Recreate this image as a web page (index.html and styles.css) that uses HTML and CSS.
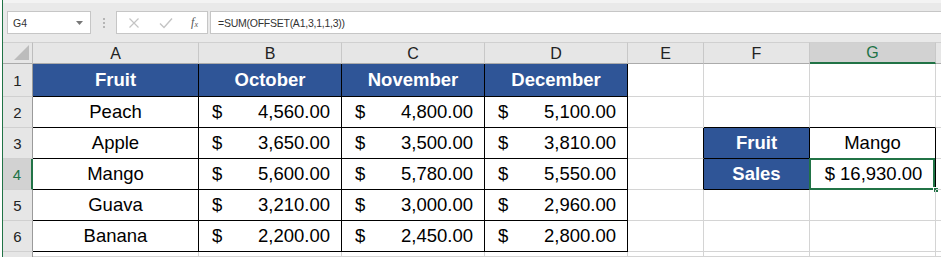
FILE: index.html
```html
<!doctype html>
<html lang="en">
<head>
    <meta charset="UTF-8">
    <title>OFFSET sum</title>
    <link rel="stylesheet" href="styles.css">
</head>
<body>
<div class="app">
    <div class="fbar">
        <div class="namebox">
            <span>G4</span>
            <svg class="caret" width="7" height="4" viewBox="0 0 7 4"><path d="M0 0h7L3.5 4z" fill="#777"/></svg>
        </div>
        <div class="grip"><i></i><i></i><i></i></div>
        <div class="btns">
            <svg width="12" height="12" viewBox="0 0 12 12"><path d="M1.5 1.5l9 9M10.5 1.5l-9 9" stroke="#c4c4c4" stroke-width="1.2" fill="none"/></svg>
            <svg width="14" height="12" viewBox="0 0 14 12"><path d="M1 6.5l4 4L13 1.5" stroke="#c4c4c4" stroke-width="1.4" fill="none"/></svg>
            <span class="fx">f<sub>x</sub></span>
        </div>
        <div class="formula">=SUM(OFFSET(A1,3,1,1,3))</div>
    </div>

    <div class="sheet">
        <div class="corner"><i></i></div>
        <div class="ch">A</div>
        <div class="ch">B</div>
        <div class="ch">C</div>
        <div class="ch">D</div>
        <div class="ch">E</div>
        <div class="ch">F</div>
        <div class="ch sel">G</div>
        <div class="ch last"></div>

        <div class="rh r1">1</div>
        <div class="c t hd">Fruit</div>
        <div class="c t hd">October</div>
        <div class="c t hd">November</div>
        <div class="c t hd">December</div>
        <div class="c"></div>
        <div class="c"></div>
        <div class="c"></div>
        <div class="c last"></div>

        <div class="rh">2</div>
        <div class="c t mid">Peach</div>
        <div class="c t acc"><span>$</span><span>4,560.00</span></div>
        <div class="c t acc"><span>$</span><span>4,800.00</span></div>
        <div class="c t acc"><span>$</span><span>5,100.00</span></div>
        <div class="c"></div>
        <div class="c bb"></div>
        <div class="c bb"></div>
        <div class="c last"></div>

        <div class="rh">3</div>
        <div class="c t mid">Apple</div>
        <div class="c t acc"><span>$</span><span>3,650.00</span></div>
        <div class="c t acc"><span>$</span><span>3,500.00</span></div>
        <div class="c t acc"><span>$</span><span>3,810.00</span></div>
        <div class="c br"></div>
        <div class="c t hd">Fruit</div>
        <div class="c t mid">Mango</div>
        <div class="c last"></div>

        <div class="rh sel">4</div>
        <div class="c t mid">Mango</div>
        <div class="c t acc"><span>$</span><span>5,600.00</span></div>
        <div class="c t acc"><span>$</span><span>5,780.00</span></div>
        <div class="c t acc"><span>$</span><span>5,550.00</span></div>
        <div class="c br"></div>
        <div class="c t hd">Sales</div>
        <div class="c t mid active">$ 16,930.00<b class="cursor"></b><b class="handle"></b></div>
        <div class="c last"></div>

        <div class="rh">5</div>
        <div class="c t mid">Guava</div>
        <div class="c t acc"><span>$</span><span>3,210.00</span></div>
        <div class="c t acc"><span>$</span><span>3,000.00</span></div>
        <div class="c t acc"><span>$</span><span>2,960.00</span></div>
        <div class="c"></div>
        <div class="c"></div>
        <div class="c"></div>
        <div class="c last"></div>

        <div class="rh">6</div>
        <div class="c t mid">Banana</div>
        <div class="c t acc"><span>$</span><span>2,200.00</span></div>
        <div class="c t acc"><span>$</span><span>2,450.00</span></div>
        <div class="c t acc"><span>$</span><span>2,800.00</span></div>
        <div class="c"></div>
        <div class="c"></div>
        <div class="c"></div>
        <div class="c last"></div>

        <div class="rh r7"></div>
        <div class="c"></div>
        <div class="c"></div>
        <div class="c"></div>
        <div class="c"></div>
        <div class="c"></div>
        <div class="c"></div>
        <div class="c"></div>
        <div class="c last"></div>
    </div>
</div>
</body>
</html>
```

FILE: styles.css
```css
*{
    margin: 0;
    padding: 0;
    box-sizing: border-box;
}
body{
    width: 941px;
    height: 257px;
    overflow: hidden;
    background: #fff;
    font-family: "Liberation Sans", Arial, sans-serif;
}
.app{
    margin-left: 2px;
    border-left: 1px solid #217346;
    height: 257px;
}

/* formula bar */
.fbar{
    height: 42px;
    background: #e9e9e9;
    border-top: 3px solid #f3f3f3;
    display: flex;
    align-items: flex-start;
    padding: 8px 0 0 4px;
    font-size: 10.5px;
    color: #333;
}
.namebox{
    width: 84px;
    height: 23px;
    background: #fff;
    border: 1px solid #c6c6c6;
    display: flex;
    align-items: center;
    justify-content: space-between;
    padding: 0 7px 0 5px;
}
.grip{
    width: 25px;
    height: 23px;
    display: flex;
    flex-direction: column;
    align-items: center;
    justify-content: center;
    gap: 2px;
}
.grip i{
    width: 2px;
    height: 2px;
    background: #b5b5b5;
}
.btns{
    width: 92px;
    height: 23px;
    background: #fff;
    border: 1px solid #c6c6c6;
    display: flex;
    align-items: center;
    justify-content: space-between;
    padding: 0 9px 0 11px;
}
.fx{
    font-family: "Liberation Serif", serif;
    font-style: italic;
    font-size: 12px;
    color: #555;
}
.fx sub{
    font-size: 8px;
    vertical-align: -1px;
}
.formula{
    flex: 1;
    height: 23px;
    margin-left: 2px;
    background: #fff;
    border: 1px solid #c6c6c6;
    border-right: none;
    padding: 5px 0 0 7px;
    letter-spacing: -0.25px;
}

/* grid */
.sheet{
    display: grid;
    grid-template-columns: 30px 166px 143px 143px 143px 76px 106px 126px 1fr;
    grid-template-rows: 22px 33px 31px 31px 31px 31px 31px 1fr;
    height: 215px;
}
.corner{
    background: #e6e6e6;
    border-top: 1px solid #d0d0d0;
    border-right: 1px solid #bdbdbd;
    border-bottom: 1px solid #ababab;
    position: relative;
}
.corner i{
    position: absolute;
    right: 3px;
    bottom: 3px;
    width: 0;
    height: 0;
    border-left: 15px solid transparent;
    border-bottom: 15px solid #bcbcbc;
}
.ch{
    background: #e6e6e6;
    border-top: 1px solid #d0d0d0;
    border-right: 1px solid #c8c8c8;
    border-bottom: 1px solid #ababab;
    font-size: 16px;
    color: #222;
    display: flex;
    align-items: center;
    justify-content: center;
    padding-top: 1px;
}
.ch.sel{
    background: #d2d2d2;
    color: #217346;
    border-bottom: 2px solid #217346;
}
.ch.last{
    border-right: none;
}
.rh{
    background: #e6e6e6;
    border-right: 1px solid #9a9a9a;
    border-bottom: 1px solid #d0d0d0;
    font-size: 15px;
    color: #222;
    display: flex;
    align-items: center;
    justify-content: center;
}
.rh.sel{
    background: #d2d2d2;
    color: #217346;
    border-right: 2px solid #217346;
}
.rh.r7{
    border-bottom: none;
}
.c{
    border-right: 1px solid #d4d4d4;
    border-bottom: 1px solid #d4d4d4;
    position: relative;
}
.c.last{
    border-right: none;
}
.c.t{
    border-right-color: #000;
    border-bottom-color: #000;
    font-size: 18.5px;
    color: #000;
    display: flex;
    align-items: center;
}
.c.bb{
    border-bottom-color: #000;
}
.c.br{
    border-right-color: #000;
}
.hd{
    background: #2f5597;
    color: #fff !important;
    font-weight: bold;
    justify-content: center;
}
.mid{
    justify-content: center;
}
.acc{
    justify-content: space-between;
    padding: 0 11px 0 13px;
}
.active{
    padding-left: 2px;
}
.cursor{
    position: absolute;
    left: -1px;
    top: -1px;
    right: 0;
    bottom: -1px;
    border: 2px solid #217346;
}
.handle{
    position: absolute;
    right: -4px;
    bottom: -4px;
    width: 6px;
    height: 6px;
    background: #217346;
    border: 1px solid #fff;
}
```
